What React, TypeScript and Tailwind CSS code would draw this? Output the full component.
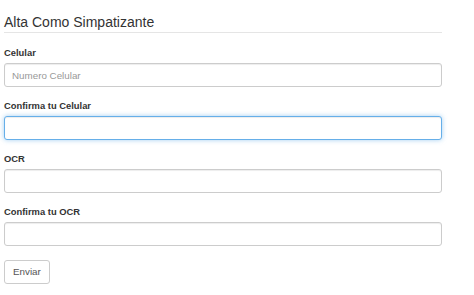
import React from "react";

const font = { fontFamily: '"Liberation Sans", Arial, Helvetica, sans-serif' };

function Field({ label, placeholder, focused }: { label: string; placeholder?: string; focused?: boolean }) {
  return (
    <div className="mb-[12px]">
      <label className="block text-[9.4px] leading-[14px] font-bold text-[#333] mb-[3px]">{label}</label>
      <input
        placeholder={placeholder}
        className={
          "block w-full h-[24px] px-[7px] text-[9.8px] text-[#555] bg-white rounded-[3px] border outline-none placeholder:text-[#999] " +
          (focused
            ? "border-[#66afe9] shadow-[inset_0_1px_1px_rgba(0,0,0,0.075),0_0_5px_rgba(102,175,233,0.6)]"
            : "border-[#ccc] shadow-[inset_0_1px_1px_rgba(0,0,0,0.075)]")
        }
      />
    </div>
  );
}

export default function App() {
  return (
    <div className="w-[474px] h-[295px] bg-white pl-[4px] pr-[32px]" style={font}>
      <div className="pt-[14px] text-[14px] leading-[16px] text-[#333] pb-[2px] border-b border-[#e5e5e5]">
        Alta Como Simpatizante
      </div>
      <div className="mt-[13px]">
        <Field label="Celular" placeholder="Numero Celular" />
        <Field label="Confirma tu Celular" focused />
        <Field label="OCR" />
        <Field label="Confirma tu OCR" />
        <button className="h-[24px] px-[8px] text-[9.8px] text-[#555] bg-white border border-[#ccc] rounded-[3px]">
          Enviar
        </button>
      </div>
    </div>
  );
}
